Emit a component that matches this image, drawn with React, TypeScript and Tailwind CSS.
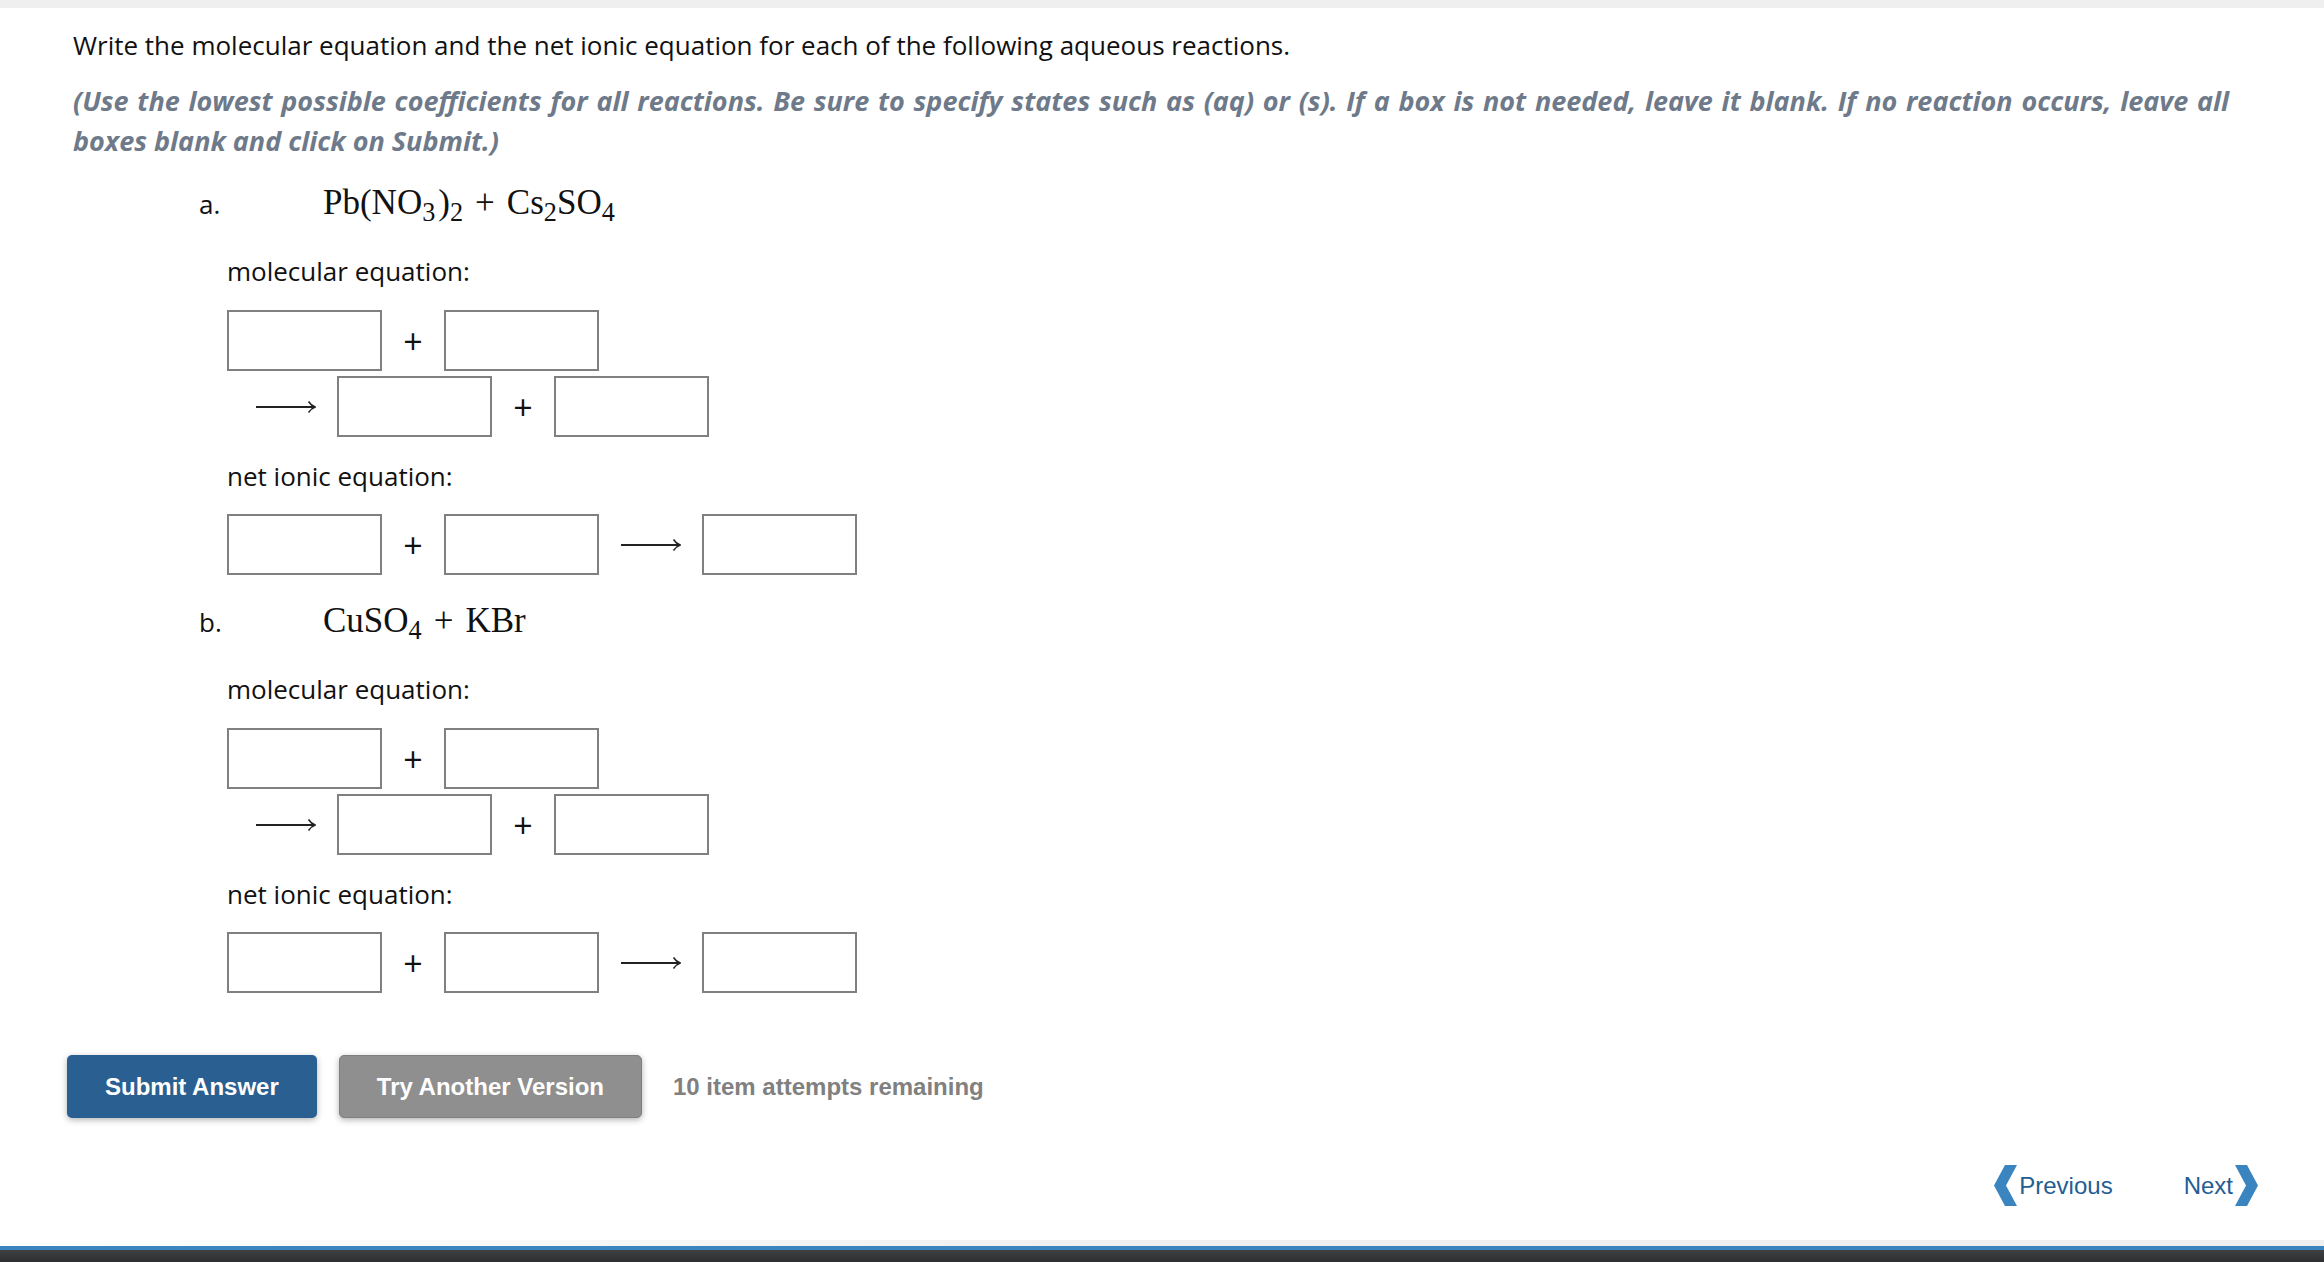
import React from 'react';

function Box() {
  return <input type="text" readOnly className="w-[155px] h-[61px] border-2 border-[#808080] bg-white outline-none" />;
}

function Plus() {
  return <span className="w-[62px] text-center text-[34px] leading-none text-[#111]">+</span>;
}

function Arrow() {
  return (
    <svg width="60" height="16" viewBox="0 0 60 16" className="block">
      <path d="M0 8H58" stroke="#222" strokeWidth="1.8" />
      <path d="M52.5 2.5Q55 6.5 59.2 8Q55 9.5 52.5 13.5" fill="none" stroke="#222" strokeWidth="1.5" />
    </svg>
  );
}

function Reaction({ letter, formula, first }: { letter: string; formula: React.ReactNode; first?: boolean }) {
  return (
    <section className={first ? 'mt-[22px]' : 'mt-[26px]'}>
      <div className="flex items-baseline leading-[40px]">
        <span className="w-[250px] shrink-0 pl-[126px] text-[26px]">{letter}</span>
        <span className="font-['Liberation_Serif',serif] text-[35px] text-[#111]">{formula}</span>
      </div>

      <div className="pl-[154px]">
        <p className="mt-[30px] text-[26px] leading-[34px]">molecular equation:</p>
        <div className="mt-[22px] flex items-center">
          <Box />
          <Plus />
          <Box />
        </div>
        <div className="mt-[5px] flex items-center pl-[29px]">
          <Arrow />
          <div className="ml-[21px] flex items-center">
            <Box />
            <Plus />
            <Box />
          </div>
        </div>

        <p className="mt-[22px] text-[26px] leading-[34px]">net ionic equation:</p>
        <div className="mt-[21px] flex items-center">
          <Box />
          <Plus />
          <Box />
          <div className="w-[103px] flex justify-center">
            <Arrow />
          </div>
          <Box />
        </div>
      </div>
    </section>
  );
}

function Chevron({ dir }: { dir: 'left' | 'right' }) {
  const pts = dir === 'left' ? '11,0 23,0 12,20.5 23,41 11,41 0,20.5' : '0,0 12,0 23,20.5 12,41 0,41 11,20.5';
  return (
    <svg width="23" height="41" viewBox="0 0 23 41" className="block">
      <polygon points={pts} fill="#3a84c0" />
    </svg>
  );
}

export default function App() {
  return (
    <div className="h-screen flex flex-col bg-white text-[#111] font-['Open_Sans',sans-serif]">
      <div className="h-[8px] bg-[#efefef]" />

      <main className="px-[73px]">
        <h1 className="mt-[20px] text-[26px] leading-[34px] font-normal">
          Write the molecular equation and the net ionic equation for each of the following aqueous reactions.
        </h1>
        <p className="mt-[19px] mr-[22px] text-[27px] leading-[40px] font-bold italic text-justify text-[#6e7a89]">
          (Use the lowest possible coefficients for all reactions. Be sure to specify states such as (aq) or (s). If a box is not needed, leave it blank. If no reaction occurs, leave all boxes blank and click on Submit.)
        </p>

        <Reaction
          first
          letter="a."
          formula={
            <>
              Pb(NO<sub>3</sub>
              <span className="ml-[3px]">)</span>
              <sub>2</sub>
              <span className="mx-[12px]">+</span>
              Cs<sub>2</sub>SO<sub>4</sub>
            </>
          }
        />
        <Reaction
          letter="b."
          formula={
            <>
              CuSO<sub>4</sub>
              <span className="mx-[12px]">+</span>
              KBr
            </>
          }
        />

        <div className="mt-[62px] -ml-[6px] flex items-center font-['Liberation_Sans',Arial,sans-serif] font-bold text-[24px]">
          <button className="h-[63px] px-[38px] rounded-[5px] bg-[#2a5f91] text-white shadow-[0_2px_6px_rgba(0,0,0,0.3)]">
            Submit Answer
          </button>
          <button className="ml-[22px] h-[63px] px-[37px] rounded-[5px] bg-[#8f8f8f] border border-[#7f7f7f] text-white shadow-[0_2px_6px_rgba(0,0,0,0.3)]">
            Try Another Version
          </button>
          <span className="ml-[31px] text-[#808080]">10 item attempts remaining</span>
        </div>
      </main>

      <nav className="mt-[47px] pr-[66px] flex justify-end items-center font-['Liberation_Sans',Arial,sans-serif] text-[24px] text-[#235d93]">
        <a href="#" className="flex items-center gap-[2px]">
          <Chevron dir="left" />
          <span>Previous</span>
        </a>
        <a href="#" className="ml-[71px] flex items-center gap-[2px]">
          <span>Next</span>
          <Chevron dir="right" />
        </a>
      </nav>

      <footer className="mt-auto">
        <div className="h-[6px] bg-gradient-to-r from-white via-[#efefef] to-[#efefef]" />
        <div className="h-[4px] bg-[#3a84c0]" />
        <div className="h-[12px] bg-gradient-to-b from-[#3e3f42] to-[#2e2f31]" />
      </footer>
    </div>
  );
}
